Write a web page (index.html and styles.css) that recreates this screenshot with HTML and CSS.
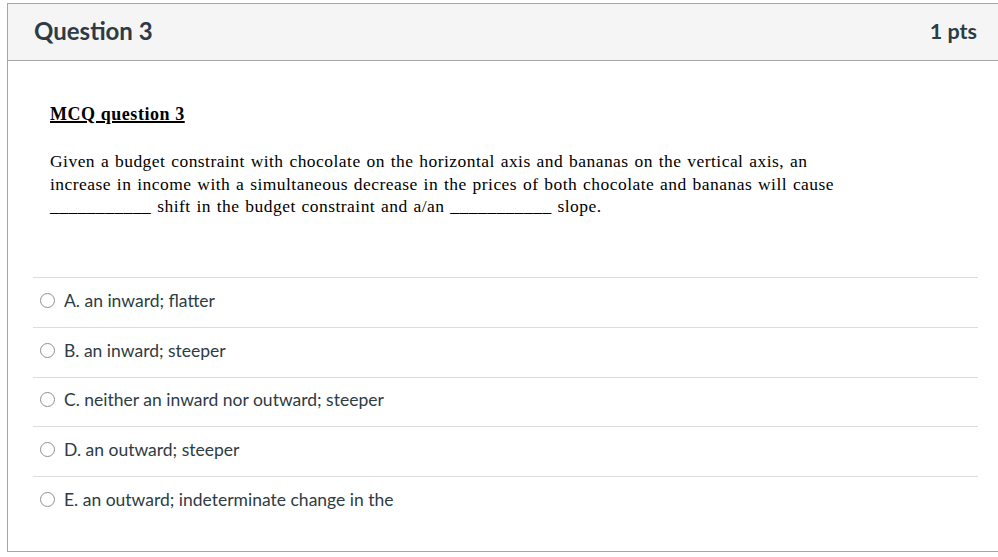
FILE: index.html
```html
<!DOCTYPE html>
<html>
<head>
<meta charset="utf-8">
<link rel="stylesheet" href="styles.css">
</head>
<body>
<div class="quiz">
  <div class="header">
    <h2 class="title">Question 3</h2>
    <div class="pts">1 pts</div>
  </div>
  <div class="content">
    <div class="qtext">
      <p class="mcq">MCQ question 3</p>
      <p class="para">Given a budget constraint with chocolate on the horizontal axis and bananas on the vertical axis, an<br>increase in income with a simultaneous decrease in the prices of both chocolate and bananas will cause<br>___________ shift in the budget constraint and a/an ___________ slope.</p>
    </div>
    <ul class="answers">
      <li class="answer"><span class="radio"></span><span>A. an inward; flatter</span></li>
      <li class="answer"><span class="radio"></span><span>B. an inward; steeper</span></li>
      <li class="answer"><span class="radio"></span><span>C. neither an inward nor outward; steeper</span></li>
      <li class="answer"><span class="radio"></span><span>D. an outward; steeper</span></li>
      <li class="answer"><span class="radio"></span><span>E. an outward; indeterminate change in the</span></li>
    </ul>
  </div>
</div>
</body>
</html>
```
FILE: styles.css
```css
html, body {
  margin: 0;
  padding: 0;
  background: #fff;
  overflow: hidden;
}
body {
  font-family: Lato, "Liberation Sans", sans-serif;
  color: #2d3b45;
}
.quiz {
  box-sizing: border-box;
  margin: 3px 0 0 7px;
  width: 993px;
  height: 549px;
  border: 1px solid #a6a6a6;
}
.header {
  box-sizing: border-box;
  height: 57px;
  background: #f5f5f5;
  border-bottom: 1px solid #a6a6a6;
  display: flex;
  align-items: center;
  justify-content: space-between;
  padding: 0 22px 3px 26px;
}
.title {
  margin: 0;
  font-size: 24px;
  font-weight: 700;
  color: #2d3b45;
}
.pts {
  font-size: 21.5px;
  font-weight: 700;
  color: #2d3b45;
}
.content {
  padding: 0 21px 0 25px;
}
.qtext {
  padding: 41px 0 0 17px;
  font-family: "Liberation Serif", "Times New Roman", serif;
  color: #000;
  height: 216px;
  box-sizing: border-box;
}
.mcq {
  margin: 0;
  font-size: 18px;
  font-weight: 700;
  letter-spacing: 0.55px;
  text-decoration: underline;
  text-decoration-thickness: 1.5px;
  line-height: 24px;
}
.para {
  margin: 24px 0 0;
  font-size: 17.5px;
  letter-spacing: 0.46px;
  word-spacing: 1px;
  line-height: 22.5px;
}
.answers {
  list-style: none;
  margin: 0;
  padding: 0;
}
.answer {
  box-sizing: border-box;
  height: 49.75px;
  border-top: 1px solid #dddddd;
  display: flex;
  align-items: center;
  font-size: 17.5px;
  padding: 0 0 4px 7px;
  gap: 9px;
}
.radio {
  width: 15px;
  height: 15px;
  border: 1px solid #8f8f8f;
  border-radius: 50%;
  box-sizing: border-box;
  flex: none;
}
```
